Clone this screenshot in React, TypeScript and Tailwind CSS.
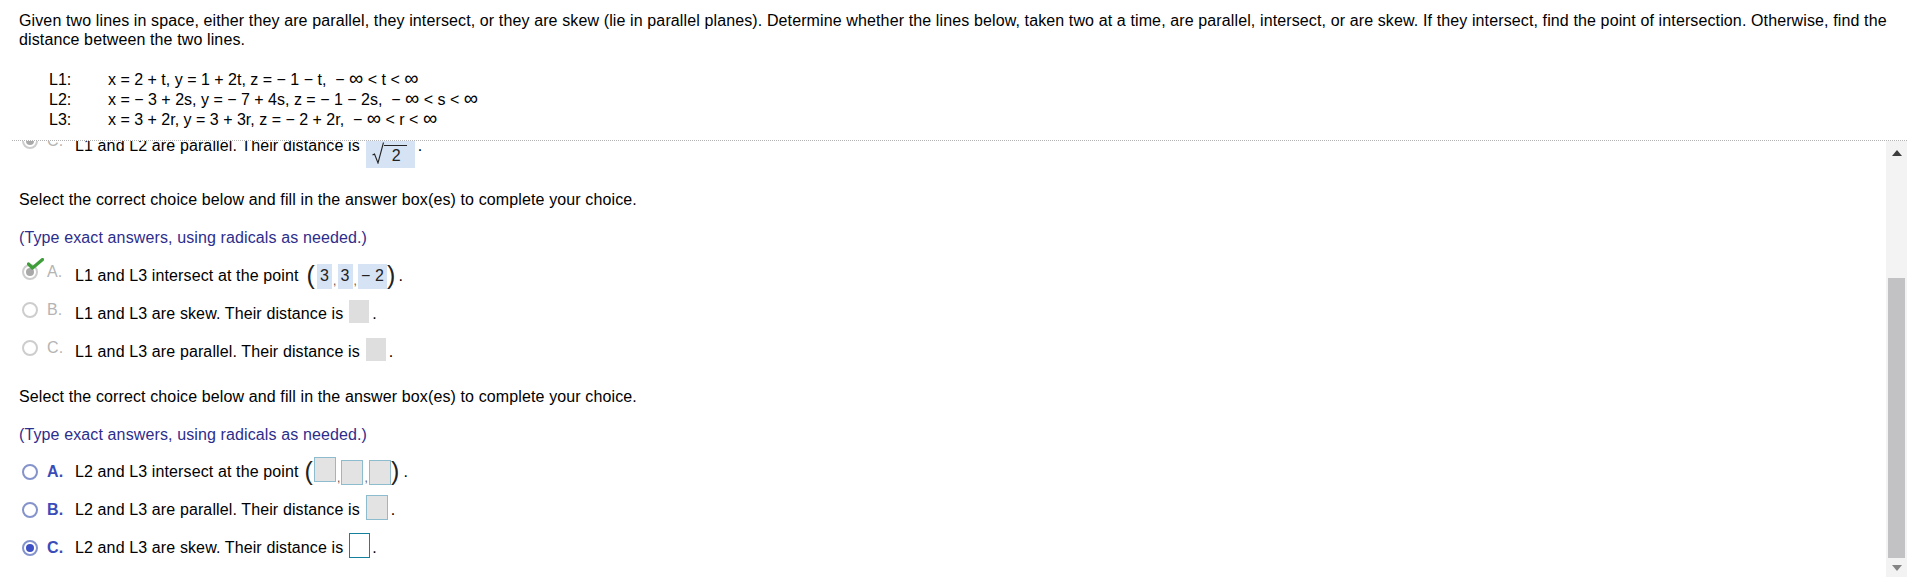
import React from "react";

type RadioKind = "grayChecked" | "gray" | "blue" | "blueSelected";

function Radio({ kind, check }: { kind: RadioKind; check?: boolean }) {
  const ring =
    kind === "gray" || kind === "grayChecked"
      ? "border-[#cdcdcd]"
      : "border-[#8593cc]";
  return (
    <div className="relative w-[16px] h-[16px] shrink-0">
      <div
        className={`w-[16px] h-[16px] rounded-full border-[2px] ${ring} bg-white flex items-center justify-center`}
      >
        {kind === "grayChecked" && (
          <div className="w-[8px] h-[8px] rounded-full bg-[#a9a9a9]" />
        )}
        {kind === "blueSelected" && (
          <div className="w-[8px] h-[8px] rounded-full bg-[#3c4fc4]" />
        )}
      </div>
      {check && (
        <svg
          className="absolute left-[5px] top-[-6px]"
          width="17"
          height="12"
          viewBox="0 0 17 12"
        >
          <path
            d="M1.5 6 L5.5 10 L15.5 1.5"
            fill="none"
            stroke="#3f9e3a"
            strokeWidth="3.2"
            strokeLinecap="round"
            strokeLinejoin="round"
          />
        </svg>
      )}
    </div>
  );
}

function Row({
  radio,
  label,
  labelClass,
  raised,
  children,
}: {
  radio: React.ReactNode;
  label: string;
  labelClass: string;
  raised?: boolean;
  children: React.ReactNode;
}) {
  return (
    <div className="flex items-center h-[38px] pl-[10px]">
      <div className={`flex items-center ${raised ? "mb-[8px]" : ""}`}>
        {radio}
        <span className={`ml-[9px] w-[28px] leading-[20px] ${labelClass}`}>
          {label}
        </span>
      </div>
      <div className="flex items-center leading-[20px]">{children}</div>
    </div>
  );
}

const grayLabel = "text-[#b4b4b4]";
const blueLabel = "text-[#3a4cb8] font-bold";

function BlueBox({ children }: { children: React.ReactNode }) {
  return (
    <span className="inline-flex items-center justify-center h-[25px] px-[3px] bg-[#d5e3f4] text-[#222]">
      {children}
    </span>
  );
}

function Comma() {
  return (
    <span className="text-[12px] leading-none self-end mb-[3px] px-[1px] text-[#555]">
      ,
    </span>
  );
}

function Paren({ c }: { c: string }) {
  return (
    <span className="text-[25px] leading-[25px] font-light text-[#222] mb-[2px]">
      {c}
    </span>
  );
}

function GrayBox() {
  return <span className="inline-block w-[20px] h-[23px] bg-[#dedede]" />;
}

function TealBox() {
  return (
    <span className="inline-block w-[22px] h-[25px] bg-[#e3e3e3] border border-[#8cbccd]" />
  );
}

function ActiveBox() {
  return (
    <span className="inline-block w-[21px] h-[25px] bg-white border border-[#16819f]" />
  );
}

function Inf() {
  return <span className="text-[20px] leading-[16px]">∞</span>;
}

export default function App() {
  return (
    <div className="w-[1919px] h-[577px] bg-white overflow-hidden text-[16px] tracking-[0.12px] text-black font-['Liberation_Sans',Arial,sans-serif]">
      {/* Header */}
      <div className="h-[140px] pt-[11px] pl-[19px]">
        <p className="leading-[19px] whitespace-nowrap">
          Given two lines in space, either they are parallel, they intersect, or they are skew (lie in parallel planes). Determine whether the lines below, taken two at a time, are parallel, intersect, or are skew. If they intersect, find the point of intersection. Otherwise, find the
          <br />
          distance between the two lines.
        </p>
        <div className="mt-[21px] pl-[30px] grid grid-cols-[59px_auto] leading-[20px] whitespace-nowrap tracking-normal">
          <span>L1:</span>
          <span>
            x = 2 + t, y = 1 + 2t, z = &minus; 1 &minus; t, &nbsp;&minus; <Inf /> &lt; t &lt; <Inf />
          </span>
          <span>L2:</span>
          <span>
            x = &minus; 3 + 2s, y = &minus; 7 + 4s, z = &minus; 1 &minus; 2s, &nbsp;&minus; <Inf /> &lt; s &lt; <Inf />
          </span>
          <span>L3:</span>
          <span>
            x = 3 + 2r, y = 3 + 3r, z = &minus; 2 + 2r, &nbsp;&minus; <Inf /> &lt; r &lt; <Inf />
          </span>
        </div>
      </div>

      {/* Scroll panel */}
      <div className="ml-[12px] w-[1895px] h-[437px] border-t border-dotted border-[#b3b3b3] flex">
        <div className="w-[1874px] h-[436px] overflow-hidden">
          <div className="-mt-[5px]">
            {/* partially scrolled-off row */}
            <div className="flex items-start h-[45px] pl-[10px]">
              <div className="flex items-center -mt-[5px]">
                <Radio kind="grayChecked" check />
                <span className={`ml-[9px] w-[28px] leading-[20px] ${grayLabel}`}>C.</span>
              </div>
              <span className="leading-[20px]">L1 and L2 are parallel. Their distance is</span>
              <span className="ml-[6px] w-[49px] h-[32px] bg-[#d5e3f4] flex items-end pb-[5px] pl-[6px]">
                <svg width="12" height="22" viewBox="0 0 12 22" className="mb-[-1px]">
                  <path d="M0.5 13 L2.5 12 L6 21 L11.5 0.5" fill="none" stroke="#222" strokeWidth="1.1" />
                </svg>
                <span className="border-t border-[#222] leading-[15px] pt-[2px] pl-[8px] pr-[6px] text-[#222]">
                  2
                </span>
              </span>
              <span className="leading-[20px] ml-[3px]">.</span>
            </div>

            {/* Group 1 */}
            <div className="flex items-center h-[38px] pl-[7px] leading-[20px]">
              Select the correct choice below and fill in the answer box(es) to complete your choice.
            </div>
            <div className="flex items-center h-[38px] pl-[7px] leading-[20px] text-[#2d2d8c]">
              (Type exact answers, using radicals as needed.)
            </div>
            <Row radio={<Radio kind="grayChecked" check />} label="A." labelClass={grayLabel} raised>
              <span>L1 and L3 intersect at the point</span>
              <span className="ml-[8px] flex items-center">
                <Paren c="(" />
                <span className="ml-[2px]">
                  <BlueBox>3</BlueBox>
                </span>
                <Comma />
                <BlueBox>3</BlueBox>
                <Comma />
                <BlueBox>&minus; 2</BlueBox>
                <Paren c=")" />
                <span className="ml-[3px]">.</span>
              </span>
            </Row>
            <Row radio={<Radio kind="gray" />} label="B." labelClass={grayLabel} raised>
              <span>L1 and L3 are skew. Their distance is</span>
              <span className="ml-[6px]">
                <GrayBox />
              </span>
              <span className="ml-[3px]">.</span>
            </Row>
            <Row radio={<Radio kind="gray" />} label="C." labelClass={grayLabel} raised>
              <span>L1 and L3 are parallel. Their distance is</span>
              <span className="ml-[6px]">
                <GrayBox />
              </span>
              <span className="ml-[3px]">.</span>
            </Row>

            {/* Group 2 */}
            <div className="mt-[7px] flex items-center h-[38px] pl-[7px] leading-[20px]">
              Select the correct choice below and fill in the answer box(es) to complete your choice.
            </div>
            <div className="flex items-center h-[37px] pl-[7px] leading-[20px] text-[#2d2d8c]">
              (Type exact answers, using radicals as needed.)
            </div>
            <Row radio={<Radio kind="blue" />} label="A." labelClass={blueLabel}>
              <span>L2 and L3 intersect at the point</span>
              <span className="ml-[6px] flex items-center">
                <Paren c="(" />
                <span className="ml-[1px]">
                  <TealBox />
                </span>
                <Comma />
                <TealBox />
                <Comma />
                <TealBox />
                <Paren c=")" />
                <span className="ml-[4px]">.</span>
              </span>
            </Row>
            <Row radio={<Radio kind="blue" />} label="B." labelClass={blueLabel}>
              <span>L2 and L3 are parallel. Their distance is</span>
              <span className="ml-[6px]">
                <TealBox />
              </span>
              <span className="ml-[3px]">.</span>
            </Row>
            <Row radio={<Radio kind="blueSelected" />} label="C." labelClass={blueLabel}>
              <span>L2 and L3 are skew. Their distance is</span>
              <span className="ml-[6px]">
                <ActiveBox />
              </span>
              <span className="ml-[2px]">.</span>
            </Row>
          </div>
        </div>

        {/* Scrollbar */}
        <div className="w-[21px] h-[436px] bg-[#f3f3f3] flex flex-col items-center">
          <div className="h-[24px] w-full flex items-center justify-center">
            <svg width="10" height="6" viewBox="0 0 10 6">
              <path d="M0 6 L5 0 L10 6 Z" fill="#3d3d3d" />
            </svg>
          </div>
          <div className="h-[113px]" />
          <div className="h-[280px] w-[17px] bg-[#c2c2c4]" />
          <div className="h-[19px] w-full flex items-center justify-center">
            <svg width="10" height="6" viewBox="0 0 10 6">
              <path d="M0 0 L10 0 L5 6 Z" fill="#858585" />
            </svg>
          </div>
        </div>
      </div>
    </div>
  );
}
